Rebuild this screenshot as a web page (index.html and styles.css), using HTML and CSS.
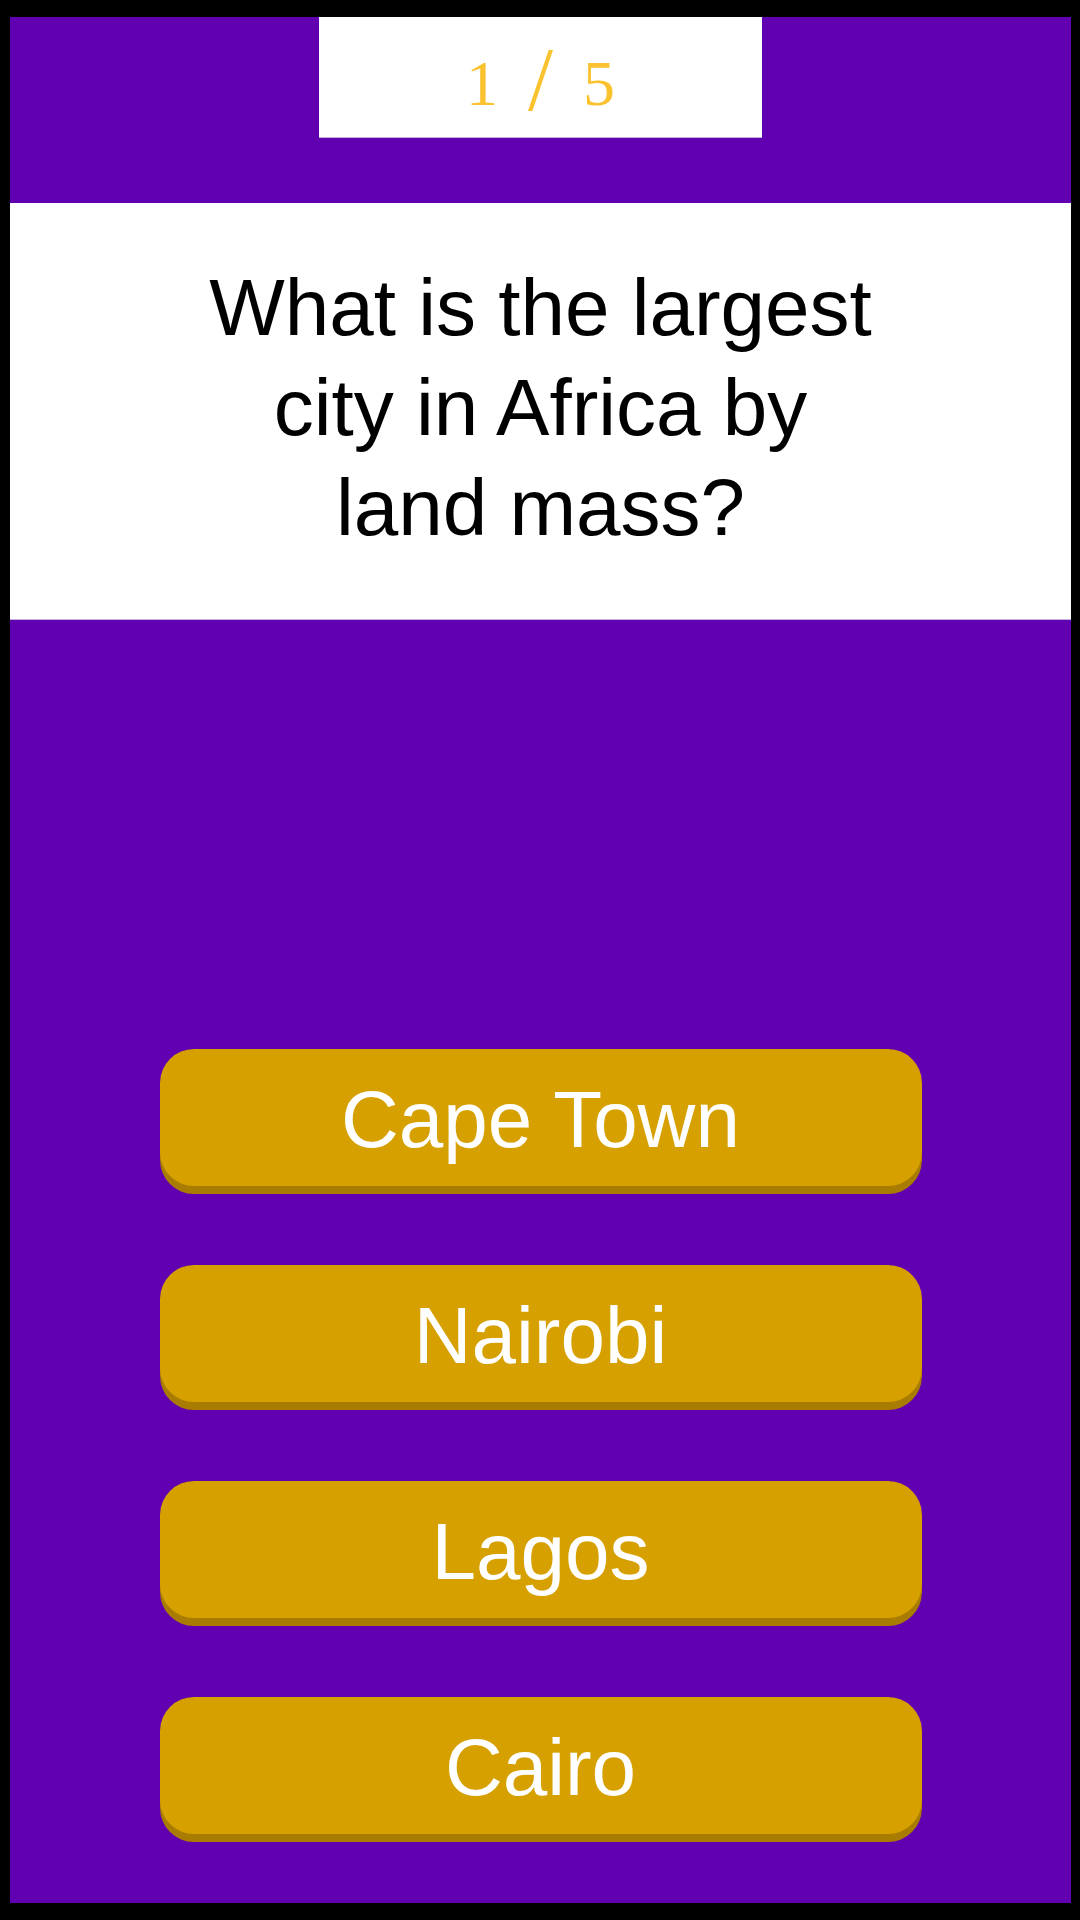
FILE: index.html
```html
<!DOCTYPE html>
<html lang="en">
<head>
    <meta charset="UTF-8">
    <meta name="viewport" content="width=device-width, initial-scale=1.0">
    <title>Quiz</title>
    <link rel="stylesheet" href="styles.css">
</head>
<body>
    <div class="screen">
        <div class="top">
            <div class="counter">1 <span class="slash">/</span> 5</div>
        </div>

        <div class="question">
            <p>What is the largest city in Africa by land mass?</p>
        </div>

        <div class="answers">
            <button class="answer">Cape Town</button>
            <button class="answer">Nairobi</button>
            <button class="answer">Lagos</button>
            <button class="answer">Cairo</button>
        </div>
    </div>
</body>
</html>
```

FILE: styles.css
```css
html, body {
    margin: 0;
    padding: 0;
    background-color: #000;
}

body {
    padding: 17px 9px 17px 10px;
    font-family: "Liberation Sans", Arial, sans-serif;
}

.screen {
    height: 1886px;
    background-color: #6100b1;
    display: flex;
    flex-direction: column;
}

.top {
    height: 186px;
    display: flex;
    justify-content: center;
}

.counter {
    width: 443px;
    height: 106px;
    padding-top: 14px;
    background: white;
    border-bottom: 1px solid #c6b2e2;
    text-align: center;
    line-height: 106px;
    font-family: "Liberation Serif", "Times New Roman", serif;
    font-size: 64px;
    color: #f9c22e;
    word-spacing: 14px;
}

.counter .slash {
    font-size: 90px;
    line-height: 0;
    vertical-align: -5px;
}

.question {
    background: white;
    padding: 55px 20px 61px;
    border-bottom: 1px solid #c6b2e2;
}

.question p {
    max-width: 690px;
    margin: 0 auto;
    text-align: center;
    font-size: 80px;
    line-height: 100px;
    color: #000;
}

.answers {
    margin-top: auto;
    padding-bottom: 61px;
    display: flex;
    flex-direction: column;
    align-items: center;
    gap: 71px;
}

.answer {
    width: 762px;
    height: 137px;
    margin-bottom: 8px;
    padding: 4px 0 0;
    border: none;
    border-radius: 34px;
    background-color: #d6a000;
    box-shadow: 0 8px 0 #a87c00;
    color: white;
    font-family: "Liberation Sans", Arial, sans-serif;
    font-size: 80px;
    cursor: pointer;
}
```
